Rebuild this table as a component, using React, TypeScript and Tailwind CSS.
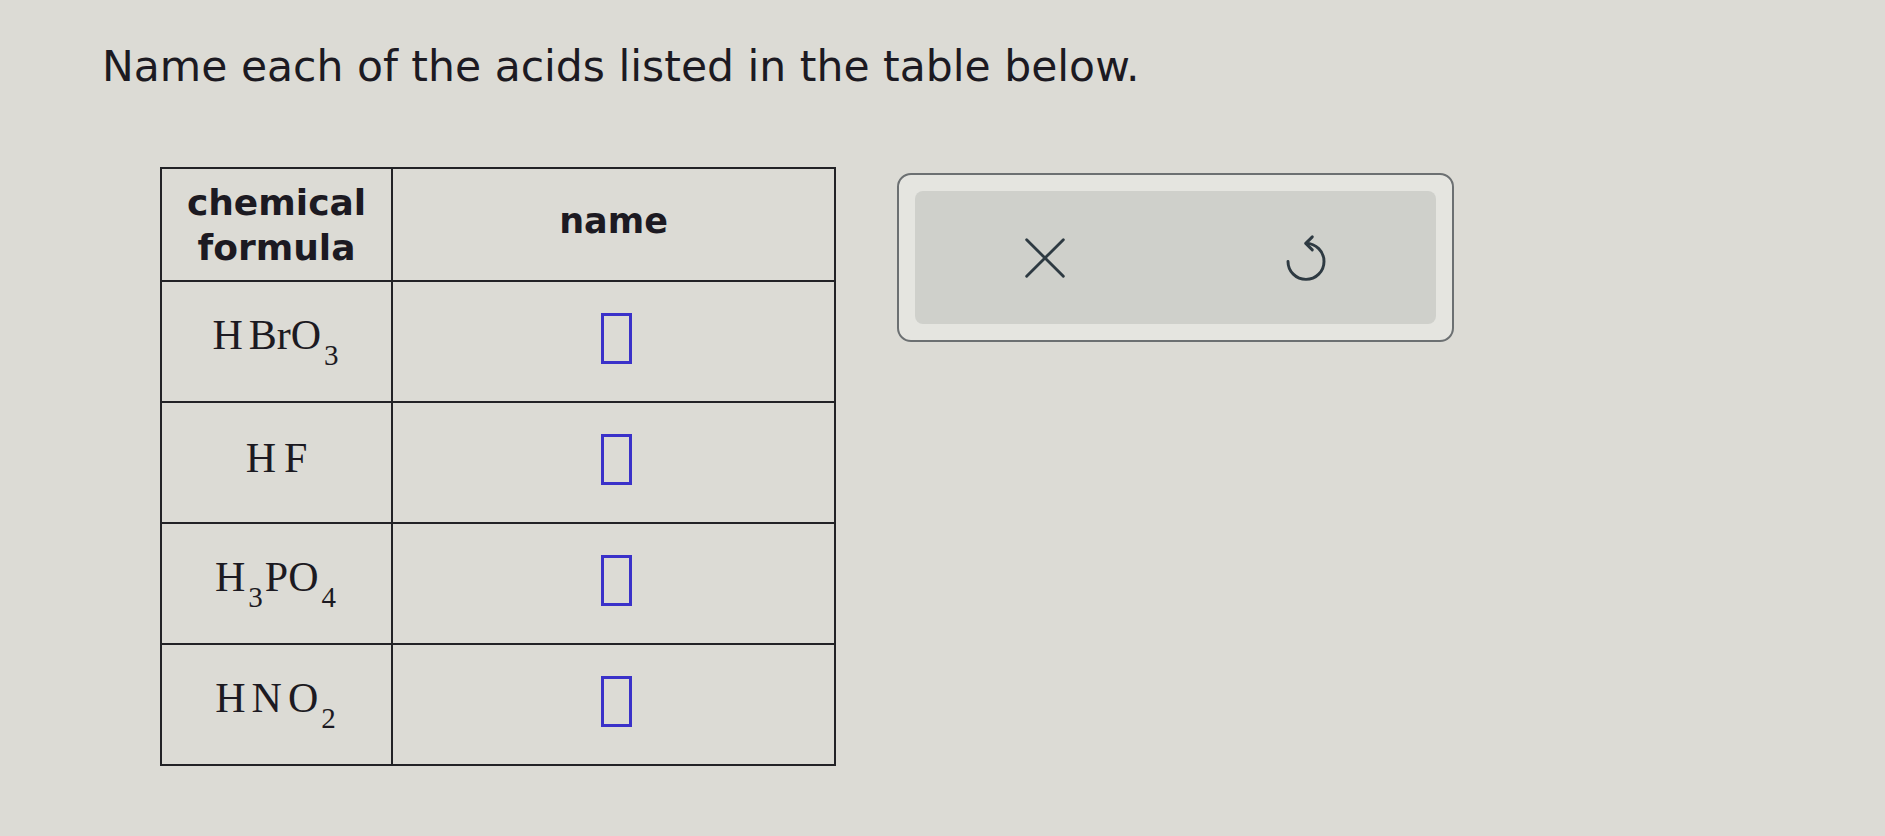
const sans = { fontFamily: '"DejaVu Sans", Verdana, sans-serif' };
const serif = { fontFamily: '"Liberation Serif", "Times New Roman", serif' };

const Sub = ({ n }: { n: string }) => (
  <span className="relative top-[16px] ml-[3px] mr-[2px] text-[29px]">{n}</span>
);

const rows = [
  { id: "hbro3", f: <><span>H</span><span className="ml-[6px]">BrO</span><Sub n="3" /></> },
  { id: "hf", f: <><span>H</span><span className="ml-[8px]">F</span></> },
  { id: "h3po4", f: <><span>H</span><Sub n="3" /><span>PO</span><Sub n="4" /></> },
  { id: "hno2", f: <><span>H</span><span className="ml-[6px]">N</span><span className="ml-[6px]">O</span><Sub n="2" /></> },
];

const XIcon = () => (
  <svg width="44" height="44" viewBox="0 0 24 24" fill="none" stroke="#2e3a42" strokeWidth="1.55" strokeLinecap="round">
    <path d="M2 2L22 22M22 2L2 22" />
  </svg>
);

const UndoIcon = () => (
  <svg width="54" height="54" viewBox="0 0 24 24" fill="none" stroke="#2e3a42" strokeWidth="1.3" strokeLinecap="round" strokeLinejoin="round">
    <path d="M4 13.5a8 8 0 1 0 8-8" />
    <path d="M14.8 2.6L11.9 5.5l2.9 2.9" />
  </svg>
);

export default function App() {
  return (
    <div className="w-[1885px] h-[836px] bg-[#dcdbd5] text-[#1c1a22] overflow-hidden" style={sans}>
      <div className="pl-[102px] pt-[46px] text-[42.5px] leading-[42px]">
        Name each of the acids listed in the table below.
      </div>
      <div className="flex items-start mt-[79px] ml-[160px] gap-[61px]">
        <table className="border-collapse border-2 border-[#222226]">
          <thead>
            <tr className="h-[113px]">
              <th className="w-[231px] border-2 border-[#222226] text-[36px] leading-[45px] font-bold">
                chemical<br />formula
              </th>
              <th className="w-[443px] border-2 border-[#222226] text-[35px] leading-[45px] font-bold pb-[6px]">
                name
              </th>
            </tr>
          </thead>
          <tbody>
            {rows.map((r) => (
              <tr key={r.id} className="h-[121px]">
                <td className="border-2 border-[#222226] text-center text-[42px] leading-[42px] pb-[10px]" style={serif}>
                  {r.f}
                </td>
                <td className="border-2 border-[#222226]">
                  <div className="flex justify-center pl-[6px] pb-[6px]">
                    <div className="w-[31px] h-[51px] border-[3px] border-[#3a31c9]" />
                  </div>
                </td>
              </tr>
            ))}
          </tbody>
        </table>
        <div className="mt-[6px] w-[557px] h-[169px] rounded-[14px] border-2 border-[#6c7072] bg-[#e5e5e0] p-[16px]">
          <div className="flex h-full rounded-[8px] bg-[#cfd0cb]">
            <button className="flex-1 flex items-center justify-center">
              <XIcon />
            </button>
            <button className="flex-1 flex items-center justify-center">
              <UndoIcon />
            </button>
          </div>
        </div>
      </div>
    </div>
  );
}
